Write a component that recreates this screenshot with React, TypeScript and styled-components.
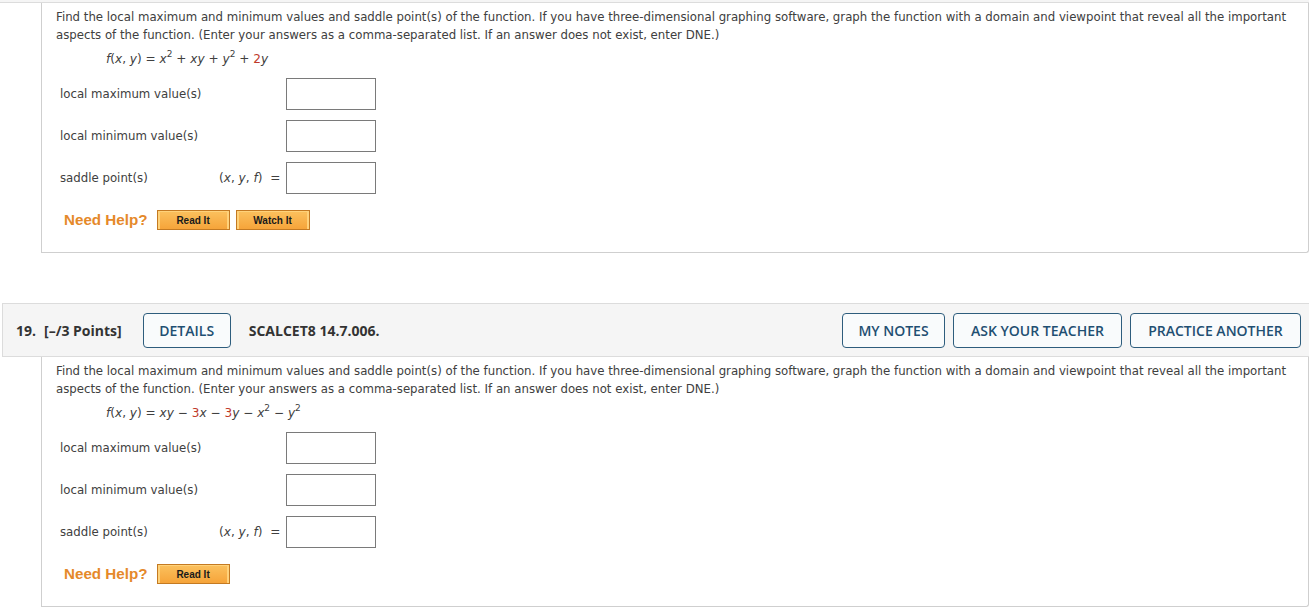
import React from "react";
import styled, { createGlobalStyle } from "styled-components";

const Global = createGlobalStyle`
  html, body { margin: 0; padding: 0; background: #fff; }
  body { font-family: "DejaVu Sans", Verdana, sans-serif; }
`;

const Page = styled.div`
  width: 1307px;
  margin-left: 2px;
  display: flex;
  flex-direction: column;
`;

const HeaderStub = styled.div`
  height: 2px;
  background: #f5f5f5;
  border-bottom: 1px solid #dcdcdc;
  margin-left: -2px;
`;

const Header = styled.div`
  height: 52px;
  margin-top: 50px;
  background: #f5f5f5;
  border: 1px solid #dcdcdc;
  border-right: none;
  display: flex;
  align-items: center;
  padding: 0 8px 0 13px;
  font-family: "Open Sans", sans-serif;
  color: #333;
`;

const Num = styled.span`
  font-weight: 700;
  font-size: 14px;
  margin-right: 8px;
`;

const Points = styled.span`
  font-weight: 700;
  font-size: 14px;
  margin-right: 21px;
`;

const Code = styled.span`
  font-weight: 700;
  font-size: 14px;
  margin-left: 18px;
  flex: 1;
`;

const HButton = styled.button<{ $w: number }>`
  width: ${(p) => p.$w}px;
  height: 35px;
  box-sizing: border-box;
  border: 1px solid #2e5d7d;
  border-radius: 4px;
  background: #f9fbfc;
  color: #1f4f72;
  font-family: "Open Sans", sans-serif;
  font-size: 14px;
  font-weight: 600;
  padding: 0;
  margin-left: 8px;
  &:first-of-type { margin-left: 0; }
`;

const Body = styled.div<{ $pb: number }>`
  margin-left: 39px;
  border: 1px solid #cfcfcf;
  border-top: none;
  border-radius: 0 0 3px 0;
  padding: 5px 14px ${(p) => p.$pb}px 14px;
  color: #404040;
  font-size: 11.75px;
  line-height: 18px;
`;

const Prompt = styled.p`
  margin: 0;
`;

const Formula = styled.div`
  margin: 6px 0 0 50px;
  line-height: 18px;
  font-size: 12.1px;
`;

const V = styled.i`
  font-style: italic;
`;

const Red = styled.span`
  color: #c0392b;
`;

const Sup = styled.sup`
  font-size: 9px;
  line-height: 0;
  vertical-align: 6px;
`;

const Rows = styled.div`
  margin: 10px 0 0 4px;
  display: flex;
  flex-direction: column;
  gap: 10px;
`;

const Row = styled.div`
  display: grid;
  grid-template-columns: 159px 67px 90px;
  align-items: center;
  height: 32px;
`;

const Label = styled.span``;

const Prefix = styled.span`
  text-align: left;
  font-size: 12.1px;
`;

const Box = styled.div`
  width: 90px;
  height: 32px;
  box-sizing: border-box;
  border: 1px solid #7a7a7a;
  background: #fff;
`;

const Help = styled.div`
  display: flex;
  align-items: center;
  margin: 16px 0 0 8px;
  gap: 6px;
`;

const HelpText = styled.span`
  font-family: "Liberation Sans", Arial, sans-serif;
  font-weight: 700;
  font-size: 15.2px;
  color: #e5892a;
  margin-right: 3px;
`;

const OrangeBtn = styled.button<{ $w: number }>`
  width: ${(p) => p.$w}px;
  height: 20px;
  box-sizing: border-box;
  border: 1px solid #c47a22;
  box-shadow: inset 2px 0 0 #ffd27a, inset -2px 0 0 #ffd27a, inset 0 1px 0 #ffd27a;
  background: linear-gradient(#fbc15e, #f6a43a);
  font-family: "Liberation Sans", Arial, sans-serif;
  font-weight: 700;
  font-size: 10px;
  color: #1a1a1a;
  padding: 0;
`;

type Q = {
  formula: React.ReactNode;
  watch: boolean;
};

function Question({ formula, watch, pb }: Q & { pb: number }) {
  return (
    <Body $pb={pb}>
      <Prompt>
        Find the local maximum and minimum values and saddle point(s) of the function. If you have three-dimensional graphing software, graph the function with a domain and viewpoint that reveal all the important aspects of the function. (Enter your answers as a comma-separated list. If an answer does not exist, enter DNE.)
      </Prompt>
      <Formula>{formula}</Formula>
      <Rows>
        <Row>
          <Label>local maximum value(s)</Label>
          <span />
          <Box />
        </Row>
        <Row>
          <Label>local minimum value(s)</Label>
          <span />
          <Box />
        </Row>
        <Row>
          <Label>saddle point(s)</Label>
          <Prefix>
            (<V>x</V>, <V>y</V>, <V>f</V>)&nbsp;&nbsp;=
          </Prefix>
          <Box />
        </Row>
      </Rows>
      <Help>
        <HelpText>Need Help?</HelpText>
        <OrangeBtn $w={73}>Read It</OrangeBtn>
        {watch && <OrangeBtn $w={74}>Watch It</OrangeBtn>}
      </Help>
    </Body>
  );
}

export default function App() {
  return (
    <>
      <Global />
      <Page>
        <HeaderStub />
        <Question
          pb={22}
          watch
          formula={
            <>
              <V>f</V>(<V>x</V>, <V>y</V>) = <V>x</V>
              <Sup>2</Sup> + <V>xy</V> + <V>y</V>
              <Sup>2</Sup> + <Red>2</Red>
              <V>y</V>
            </>
          }
        />
        <Header>
          <Num>19.</Num>
          <Points>[–/3 Points]</Points>
          <HButton $w={88}>DETAILS</HButton>
          <Code>SCALCET8 14.7.006.</Code>
          <HButton $w={103}>MY NOTES</HButton>
          <HButton $w={169}>ASK YOUR TEACHER</HButton>
          <HButton $w={171}>PRACTICE ANOTHER</HButton>
        </Header>
        <Question
          pb={22}
          watch={false}
          formula={
            <>
              <V>f</V>(<V>x</V>, <V>y</V>) = <V>xy</V> − <Red>3</Red>
              <V>x</V> − <Red>3</Red>
              <V>y</V> − <V>x</V>
              <Sup>2</Sup> − <V>y</V>
              <Sup>2</Sup>
            </>
          }
        />
      </Page>
    </>
  );
}
